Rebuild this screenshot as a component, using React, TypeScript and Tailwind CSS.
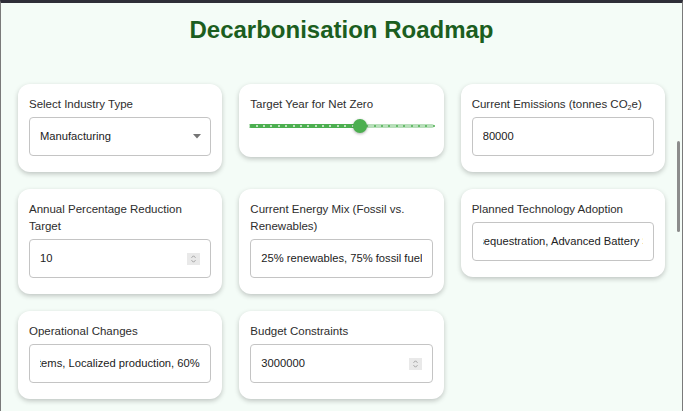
const font = { fontFamily: '"Liberation Sans", Arial, sans-serif' };

function Card({ label, children, tall }: { label: React.ReactNode; children: React.ReactNode; tall?: boolean }) {
  return (
    <div className={`bg-white rounded-[12px] shadow-[0_2px_5px_rgba(0,0,0,0.22)] px-[11px] pt-[12px] ${tall ? 'pb-[22px]' : 'pb-[16px]'}`}>
      <div className="text-[11.5px] leading-[17px] text-[#2d2d2d] mb-[4px]">{label}</div>
      {children}
    </div>
  );
}

function Field({ children, right }: { children: React.ReactNode; right?: React.ReactNode }) {
  return (
    <div className="h-[39px] border border-[#c4c4c4] rounded-[4px] px-[10px] flex items-center gap-2">
      <div className="flex-1 overflow-hidden whitespace-nowrap text-[11.2px] text-[#222]">{children}</div>
      {right}
    </div>
  );
}

function Spinner() {
  return (
    <svg width="13" height="12" viewBox="0 0 13 12" className="shrink-0">
      <rect width="13" height="12" fill="#e9e9e9" />
      <path d="M4.5 4.8 L6.5 2.8 L8.5 4.8" fill="none" stroke="#999" strokeWidth="0.9" />
      <path d="M4.5 7.2 L6.5 9.2 L8.5 7.2" fill="none" stroke="#999" strokeWidth="0.9" />
    </svg>
  );
}

function Slider() {
  const marks = Array.from({ length: 26 }, (_, i) => i);
  const value = 15;
  return (
    <div className="relative h-[18px] mx-[-1px]">
      <div className="absolute left-0 right-0 top-[7px] h-[4px] rounded-full bg-[#b8dfba]" />
      <div className="absolute left-0 top-[7px] h-[4px] rounded-full bg-[#4caf50]" style={{ width: `${(value / 25) * 100}%` }} />
      {marks.map((i) => (
        <span
          key={i}
          className={`absolute top-[8px] w-[2px] h-[2px] rounded-[1px] ${i < value ? 'bg-white/85' : 'bg-[#4caf50]'}`}
          style={{ left: `calc(${(i / 25) * 100}% - 1px)` }}
        />
      ))}
      <span
        className="absolute top-[2px] w-[14px] h-[14px] rounded-full bg-[#4caf50] shadow-[0_1px_3px_rgba(0,0,0,0.3)]"
        style={{ left: `calc(${(value / 25) * 100}% - 7px)` }}
      />
    </div>
  );
}

export default function App() {
  return (
    <div style={font} className="relative h-[411px] overflow-hidden bg-[#f4fcf7] border-t-[3px] border-t-[#2e2e38] border-x border-x-[#7a7a7a]">
      <h1 className="pt-[11px] text-center text-[24px] leading-[32px] font-bold text-[#1b5e20]">Decarbonisation Roadmap</h1>
      <div className="mt-[38px] px-[17px] grid grid-cols-3 gap-[17px] items-start">
        <Card label="Select Industry Type">
          <Field
            right={
              <svg width="8" height="5" viewBox="0 0 8 5" className="shrink-0 mr-[-1px]">
                <path d="M0 0 L8 0 L4 4.5 Z" fill="#757575" />
              </svg>
            }
          >
            Manufacturing
          </Field>
        </Card>
        <Card label="Target Year for Net Zero" tall>
          <Slider />
        </Card>
        <Card
          label={
            <>
              Current Emissions (tonnes CO<sub className="text-[7px]">2</sub>e)
            </>
          }
        >
          <Field>80000</Field>
        </Card>

        <Card label="Annual Percentage Reduction Target">
          <Field right={<Spinner />}>10</Field>
        </Card>
        <Card label="Current Energy Mix (Fossil vs. Renewables)">
          <Field>25% renewables, 75% fossil fuels</Field>
        </Card>
        <Card label="Planned Technology Adoption">
          <Field>
            <span className="inline-block ml-[-4.5px]">sequestration, Advanced Battery Storage</span>
          </Field>
        </Card>

        <Card label="Operational Changes">
          <Field>
            <span className="inline-block ml-[-2px]">tems, Localized production, 60% reduction</span>
          </Field>
        </Card>
        <Card label="Budget Constraints">
          <Field right={<Spinner />}>3000000</Field>
        </Card>
      </div>
      <div className="absolute left-[676px] top-[138px] w-[3px] h-[91px] bg-[#8c8c8c] rounded-full" />
    </div>
  );
}
